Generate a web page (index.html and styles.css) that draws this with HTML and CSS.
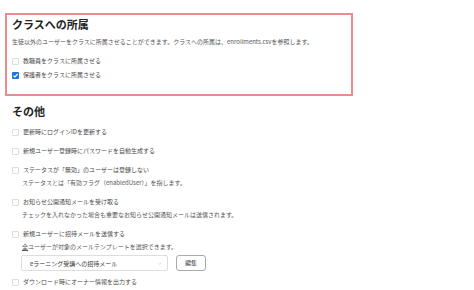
FILE: index.html
```html
<!DOCTYPE html>
<html>
  <head>
    <meta charset="utf-8" />
    <title>設定</title>
    <link rel="stylesheet" href="styles.css">
  </head>
  <body>
    <div class="page">
      <div class="section highlight">
        <h2 class="title">クラスへの所属</h2>
        <p class="desc">生徒以外のユーザーをクラスに所属させることができます。クラスへの所属は、enrollments.csvを参照します。</p>
        <div class="option first">
          <span class="check"></span>
          <span class="label">教職員をクラスに所属させる</span>
        </div>
        <div class="option">
          <span class="check on">
            <svg viewBox="0 0 8 8" width="7" height="7"><path d="M1.6 4.1 L3.3 5.7 L6.5 2.3" fill="none" stroke="#fff" stroke-width="1.3"/></svg>
          </span>
          <span class="label">保護者をクラスに所属させる</span>
        </div>
      </div>

      <div class="section">
        <h2 class="title other">その他</h2>
        <div class="item">
          <div class="option"><span class="check"></span><span class="label">更新時にログインIDを更新する</span></div>
        </div>
        <div class="item">
          <div class="option"><span class="check"></span><span class="label">新規ユーザー登録時にパスワードを自動生成する</span></div>
        </div>
        <div class="item">
          <div class="option"><span class="check"></span><span class="label">ステータスが「無効」のユーザーは登録しない</span></div>
          <p class="sub">ステータスとは「有効フラグ（enabledUser）」を指します。</p>
        </div>
        <div class="item">
          <div class="option"><span class="check"></span><span class="label">お知らせ公開通知メールを受け取る</span></div>
          <p class="sub">チェックを入れなかった場合も重要なお知らせ公開通知メールは送信されます。</p>
        </div>
        <div class="item">
          <div class="option"><span class="check"></span><span class="label">新規ユーザーに招待メールを送信する</span></div>
          <p class="sub"><span class="under">全</span>ユーザーが対象のメールテンプレートを選択できます。</p>
          <div class="pick">
            <div class="select">
              <span>eラーニング受講への招待メール</span>
              <svg viewBox="0 0 8 8" width="5" height="5"><path d="M1.5 3 L4 5.5 L6.5 3" fill="none" stroke="#bbb" stroke-width="0.8"/></svg>
            </div>
            <div class="btn">編集</div>
          </div>
        </div>
        <div class="item last">
          <div class="option"><span class="check"></span><span class="label">ダウンロード時にオーナー情報を出力する</span></div>
        </div>
      </div>
    </div>
  </body>
</html>
```

FILE: styles.css
```css
body {
  margin: 0;
  background-color: #ffffff;
  font-family: "Noto Sans CJK JP", "Noto Sans", sans-serif;
  color: #333333;
}
.page {
  padding: 13px 0 0 5px;
  width: 348px;
}
.section {
  padding: 0 7px;
}
.highlight {
  border: 2px solid #ea8b90;
  padding: 2px 5px 14px 5px;
}
.title {
  margin: 0;
  font-size: 11px;
  line-height: 14px;
  font-weight: bold;
  color: #222222;
}
.other {
  margin-top: 8px;
}
.desc {
  margin: 6px 0 0 0;
  font-size: 6px;
  line-height: 9px;
  color: #555555;
}
.option {
  display: flex;
  align-items: center;
  gap: 4px;
  height: 10px;
  margin-top: 4px;
}
.option.first {
  margin-top: 10px;
}
.check {
  display: flex;
  align-items: center;
  justify-content: center;
  width: 5px;
  height: 5px;
  border: 1px solid #dddddd;
  border-radius: 1px;
  background-color: #ffffff;
}
.check.on {
  width: 7px;
  height: 7px;
  border: none;
  background-color: #1d74e0;
}
.label {
  font-size: 6px;
  line-height: 10px;
  color: #4a4a4a;
}
.item {
  margin-top: 9px;
}
.item.last {
  margin-top: 6px;
}
.item .option {
  margin-top: 0;
}
.sub {
  margin: 3px 0 0 10px;
  font-size: 6px;
  line-height: 10px;
  color: #555555;
}
.under {
  text-decoration: underline;
}
.pick {
  display: flex;
  align-items: center;
  gap: 8px;
  margin: 3px 0 0 9px;
}
.select {
  display: flex;
  align-items: center;
  justify-content: space-between;
  box-sizing: border-box;
  width: 147px;
  height: 16px;
  padding: 0 5px 0 8px;
  border: 1px solid #dddddd;
  border-radius: 2px;
  font-size: 6px;
  color: #333333;
}
.btn {
  box-sizing: border-box;
  width: 30px;
  height: 16px;
  border: 1px solid #aaaaaa;
  border-radius: 3px;
  font-size: 6px;
  line-height: 14px;
  text-align: center;
  color: #333333;
}
```
